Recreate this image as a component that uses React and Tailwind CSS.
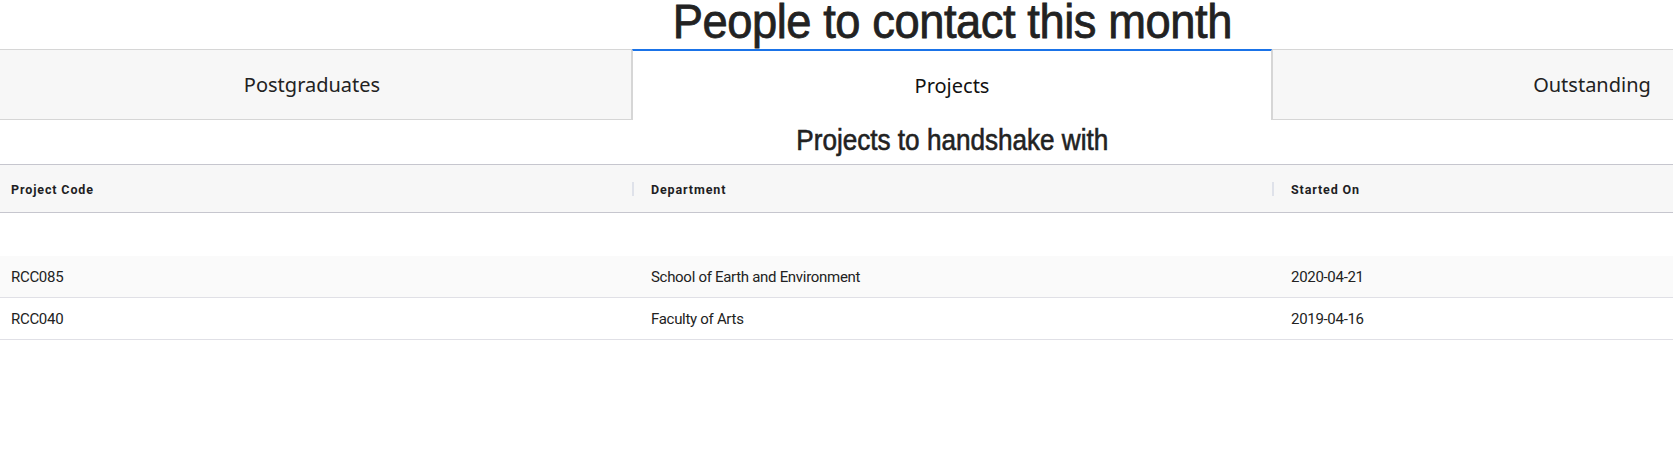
const tabs = [
  { label: "Postgraduates", active: false },
  { label: "Projects", active: true },
  { label: "Outstanding", active: false },
];

const columns = ["Project Code", "Department", "Started On"];

const rows = [
  { code: "RCC085", dept: "School of Earth and Environment", started: "2020-04-21" },
  { code: "RCC040", dept: "Faculty of Arts", started: "2019-04-16" },
];

function App() {
  return (
    <div className="w-[1673px] h-[458px] overflow-hidden bg-white text-[#222]">
      {/* page is wider than the window, scrolled a little */}
      <div className="w-[1920px] -ml-[8px]">
        <h1 className="-mt-[3px] mb-[4px] h-[48px] text-center text-[49px] leading-[48px] font-['Liberation_Sans',Arial,sans-serif]">
          <span className="inline-block scale-x-[0.925] tracking-[-0.01em] [-webkit-text-stroke:0.8px_#222]">
            People to contact this month
          </span>
        </h1>

        <div className="flex h-[71px]">
          {tabs.map((tab) => (
            <div
              key={tab.label}
              className={`flex w-[640px] items-center justify-center text-[20px] font-['Noto_Sans',sans-serif] ${
                tab.active
                  ? "border-x border-t-2 border-x-[#d6d6d6] border-t-[#1a73e8] bg-white text-[#111]"
                  : "border border-[#d6d6d6] bg-[#f7f7f7] text-[#222]"
              }`}
            >
              {tab.label}
            </div>
          ))}
        </div>

        <h2 className="mt-[2px] mb-[6px] h-[36px] text-center text-[29px] leading-[36px] font-['Liberation_Sans',Arial,sans-serif]">
          <span className="inline-block scale-x-[0.9] [-webkit-text-stroke:0.6px_#222]">Projects to handshake with</span>
        </h2>

        <div className="font-[Roboto,sans-serif]">
          <div className="flex h-[49px] border-y border-[#c6c6ce] bg-[#f7f7f7]">
            {columns.map((col, i) => (
              <div key={col} className="flex w-[640px] items-center">
                <div className={`h-[14px] w-[2px] ${i === 0 ? "" : "bg-[#dfe2ea]"}`} />
                <span className="pl-[17px] pt-[3px] text-[12.5px] font-bold tracking-[0.07em] text-[#1e1e24]">
                  {col}
                </span>
              </div>
            ))}
          </div>

          <div className="h-[43px]" />

          {rows.map((row, i) => (
            <div
              key={row.code}
              className={`flex h-[42px] border-b border-[#e0e0e6] text-[15px] tracking-[-0.02em] text-[#222] ${
                i === 0 ? "bg-[#fafafa]" : "bg-white"
              }`}
            >
              {[row.code, row.dept, row.started].map((cell, j) => (
                <div key={j} className="flex w-[640px] items-center pl-[19px] pt-[1px]">
                  {cell}
                </div>
              ))}
            </div>
          ))}
        </div>
      </div>
    </div>
  );
}

export default App;
